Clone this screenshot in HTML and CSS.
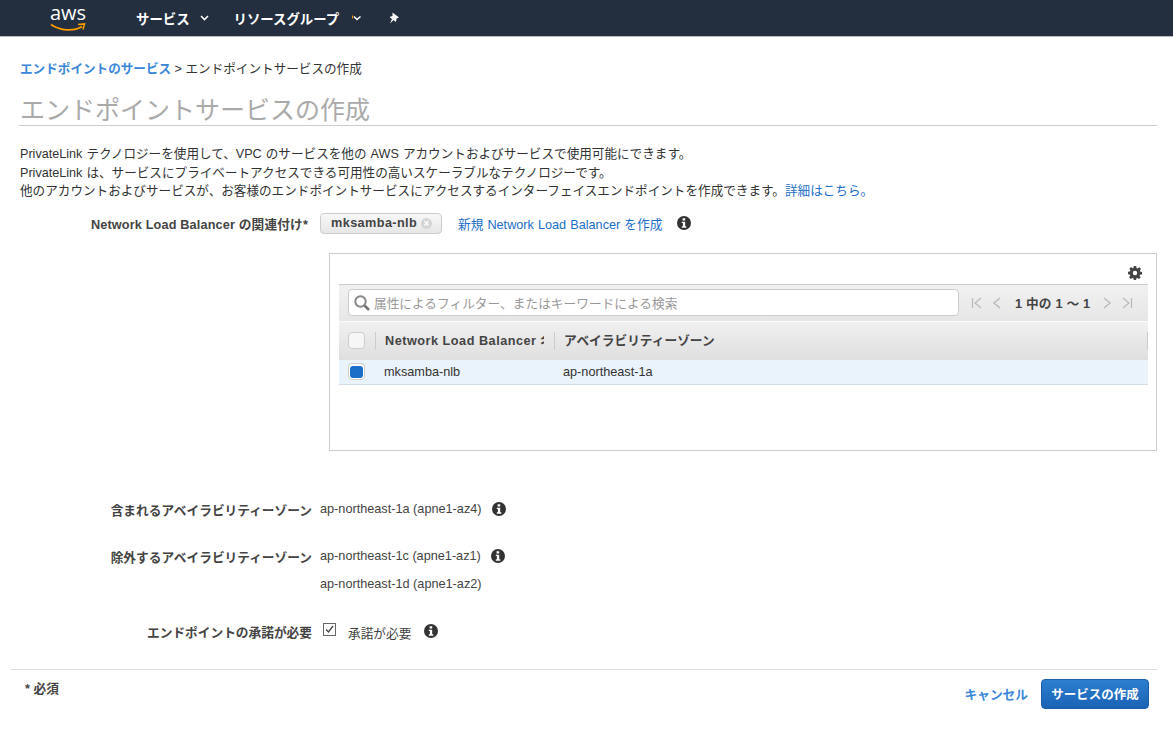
FILE: index.html
```html
<!DOCTYPE html>
<html lang="ja">
<head>
    <meta charset="UTF-8">
    <title>エンドポイントサービスの作成</title>
    <link rel="stylesheet" href="styles.css">
</head>
<body>

    <nav class="navbar">
        <div class="logo">
            <span class="logo-text">aws</span>
            <svg class="logo-smile" width="36" height="9" viewBox="0 0 36 9"><path d="M1 1.500C10 8 24 8.500 32 3.500" fill="none" stroke="#f90" stroke-width="1.800"/><path d="M28 1.500L34.500 1L33 6.500" fill="none" stroke="#f90" stroke-width="1.600"/></svg>
        </div>
        <span class="nav-item nav-services">サービス</span>
        <svg class="chevron" width="9" height="6" viewBox="0 0 9 6"><path d="M1 1l3.500 3.500L8 1" fill="none" stroke="#fff" stroke-width="1.600"/></svg>
        <span class="nav-item nav-groups">リソースグループ</span>
        <svg class="chevron chevron-groups" width="10" height="6" viewBox="0 0 10 6"><path d="M.5 .5v3" stroke="#f90" stroke-width="1"/><path d="M2 1.500l3 3 3.500-3" fill="none" stroke="#fff" stroke-width="1.600"/></svg>
        <svg class="pin" width="12" height="12" viewBox="0 0 12 12"><path d="M4.500.5L11 5.500 8.500 6.500 8 10 5.500 8 2 11.500 4 7 1.500 5 4.500 4z" fill="#fff"/></svg>
    </nav>

    <main class="content">
        <div class="breadcrumb"><a href="#">エンドポイントのサービス</a> &gt; エンドポイントサービスの作成</div>
        <h1>エンドポイントサービスの作成</h1>

        <div class="intro">
            <p>PrivateLink テクノロジーを使用して、VPC のサービスを他の AWS アカウントおよびサービスで使用可能にできます。</p>
            <p>PrivateLink は、サービスにプライベートアクセスできる可用性の高いスケーラブルなテクノロジーです。</p>
            <p>他のアカウントおよびサービスが、お客様のエンドポイントサービスにアクセスするインターフェイスエンドポイントを作成できます。<a href="#">詳細はこちら。</a></p>
        </div>

        <div class="form-row nlb-row">
            <div class="form-label">Network Load Balancer の関連付け*</div>
            <div class="form-value">
                <span class="token">mksamba-nlb<span class="token-x">×</span></span>
                <a class="new-link" href="#">新規 Network Load Balancer を作成</a>
                <svg class="info" viewBox="0 0 16 16"><use href="#info-icon"/></svg>
            </div>
        </div>

        <section class="panel">
            <div class="panel-top">
                <svg class="gear" width="14" height="14" viewBox="0 0 14 14"><path d="M5.800 0h2.400l.3 1.900 1.200.5L11.300 1.300 13 3l-1.100 1.500.5 1.200 1.600.3v2.400l-1.900.3-.5 1.200 1.100 1.500-1.700 1.700-1.500-1.100-1.200.5-.3 1.900H5.800l-.3-1.900-1.200-.5-1.500 1.100L1.100 11.300l1.100-1.500-.5-1.200L0 8.200V5.800l1.900-.3.500-1.200L1.300 2.800 3 1.100l1.500 1.100 1-.4zM7 4.800a2.200 2.200 0 1 0 0 4.400 2.200 2.200 0 0 0 0-4.400z" fill="#444" fill-rule="evenodd"/></svg>
            </div>
            <div class="toolbar">
                <div class="search">
                    <svg width="18" height="18" viewBox="0 0 18 18"><circle cx="7.500" cy="7.500" r="5.200" fill="none" stroke="#888" stroke-width="2"/><path d="M11.500 11.500l4.500 4.500" stroke="#777" stroke-width="2.600"/></svg>
                    <span>属性によるフィルター、またはキーワードによる検索</span>
                </div>
                <div class="pager">
                    <svg width="12" height="12" viewBox="0 0 12 12"><path d="M1.500 1v10M10 1L4 6l6 5" fill="none" stroke="#bbb" stroke-width="1.300"/></svg>
                    <svg width="10" height="12" viewBox="0 0 10 12"><path d="M8 1L2 6l6 5" fill="none" stroke="#bbb" stroke-width="1.500"/></svg>
                    <span class="pager-text">1 中の 1 ～ 1</span>
                    <svg width="10" height="12" viewBox="0 0 10 12"><path d="M2 1l6 5-6 5" fill="none" stroke="#bbb" stroke-width="1.500"/></svg>
                    <svg width="12" height="12" viewBox="0 0 12 12"><path d="M10.500 1v10M2 1l6 5-6 5" fill="none" stroke="#bbb" stroke-width="1.300"/></svg>
                </div>
            </div>
            <div class="table-head">
                <div class="cell-check"><span class="radio"></span></div>
                <div class="cell-name head-cell"><span class="clip">Network Load Balancer 名</span></div>
                <div class="cell-zone head-cell">アベイラビリティーゾーン</div>
            </div>
            <div class="table-row">
                <div class="cell-check"><span class="radio selected"><i></i></span></div>
                <div class="cell-name">mksamba-nlb</div>
                <div class="cell-zone">ap-northeast-1a</div>
            </div>
        </section>

        <div class="form-row zone-first">
            <div class="form-label">含まれるアベイラビリティーゾーン</div>
            <div class="form-value">
                <span>ap-northeast-1a (apne1-az4)</span>
                <svg class="info" viewBox="0 0 16 16"><use href="#info-icon"/></svg>
            </div>
        </div>

        <div class="form-row zone-second">
            <div class="form-label">除外するアベイラビリティーゾーン</div>
            <div class="form-value">
                <span>ap-northeast-1c (apne1-az1)</span>
                <svg class="info" viewBox="0 0 16 16"><use href="#info-icon"/></svg>
            </div>
        </div>
        <div class="form-row zone-extra">
            <div class="form-label"></div>
            <div class="form-value"><span>ap-northeast-1d (apne1-az2)</span></div>
        </div>

        <div class="form-row accept-row">
            <div class="form-label">エンドポイントの承諾が必要</div>
            <div class="form-value">
                <svg class="checkbox" width="13" height="13" viewBox="0 0 13 13"><rect x=".5" y=".5" width="12" height="12" fill="#fff" stroke="#666"/><path d="M3 6.500l2.500 2.500L10 3" fill="none" stroke="#444" stroke-width="1.300"/></svg>
                <span class="accept-text">承諾が必要</span>
                <svg class="info" viewBox="0 0 16 16"><use href="#info-icon"/></svg>
            </div>
        </div>
    </main>

    <footer class="footer">
        <span class="required">* 必須</span>
        <div class="actions">
            <a class="cancel" href="#">キャンセル</a>
            <button class="button">サービスの作成</button>
        </div>
    </footer>

    <svg width="0" height="0" class="defs">
        <symbol id="info-icon" viewBox="0 0 16 16">
            <path fill-rule="evenodd" fill="#333" d="M8 1a7 7 0 1 1 0 14A7 7 0 0 1 8 1zM6.600 3.200h2.600v2.300H6.600zM5.800 6.700h3.400v4.600h1.100v1.400H5.800v-1.400h1.100V8.100H5.800z"/>
        </symbol>
    </svg>

</body>
</html>
```
FILE: styles.css
```css
* {
    box-sizing: border-box;
}
body {
    margin: 0;
    font-family: "Liberation Sans", "Noto Sans CJK JP", sans-serif;
    font-size: 12.7px;
    color: #444;
    background-color: white;
    height: 730px;
    overflow: hidden;
}
a {
    color: #1a6ec7;
    text-decoration: none;
}
p {
    margin: 0;
}
.defs {
    position: absolute;
}
.navbar {
    height: 37px;
    background-color: #232f3e;
    border-bottom: 1px solid #b8bcc0;
    display: flex;
    align-items: center;
    color: white;
}
.logo {
    width: 36px;
    margin-left: 50px;
    height: 30px;
}
.logo-text {
    display: block;
    font-size: 20px;
    line-height: 20px;
    text-align: center;
    font-family: "Open Sans", sans-serif;
}
.logo-smile {
    display: block;
}
.nav-item {
    font-size: 13.4px;
    font-weight: bold;
}
.nav-services {
    margin-left: 50px;
}
.nav-groups {
    margin-left: 25px;
}
.chevron {
    margin-left: 10px;
}
.chevron-groups {
    margin-left: 13px;
}
.pin {
    margin-left: 26px;
}
.content {
    padding: 0 16px 0 20px;
}
.breadcrumb {
    margin-top: 23px;
    line-height: 18px;
    font-size: 12.6px;
    color: #333;
}
.breadcrumb a {
    font-weight: bold;
    color: #3a87d9;
}
h1 {
    margin: 12px 0 0 -1px;
    padding: 2px 0 0 1px;
    font-size: 25px;
    line-height: 36px;
    height: 36px;
    font-weight: normal;
    color: #aaa;
    border-bottom: 1px solid #ccc;
}
.intro {
    margin-top: 19px;
    line-height: 18.5px;
    font-size: 12.6px;
    word-spacing: .6px;
    color: #333;
}
.form-row {
    display: grid;
    grid-template-columns: 292px 1fr;
    column-gap: 8px;
    align-items: center;
}
.form-label {
    text-align: right;
    font-weight: bold;
    color: #444;
}
.form-value {
    display: flex;
    align-items: center;
}
.info {
    width: 16px;
    height: 16px;
}
.nlb-row {
    margin-top: 11px;
    height: 23px;
}
.nlb-row .form-label {
    padding-right: 4px;
    letter-spacing: .15px;
}
.token {
    width: 122px;
    height: 21px;
    padding-left: 10px;
    background: linear-gradient(#f8f8f8, #e6e6e6);
    border: 1px solid #ccc;
    border-radius: 4px;
    font-weight: bold;
    letter-spacing: .4px;
    display: flex;
    align-items: center;
    gap: 4px;
    white-space: pre;
}
.token-x {
    width: 11px;
    height: 11px;
    border-radius: 50%;
    background-color: #d5d5d5;
    color: white;
    font-size: 10px;
    line-height: 11px;
    text-align: center;
}
.new-link {
    margin-left: 16px;
    margin-right: 14px;
    word-spacing: .5px;
}
.panel {
    margin: 18px 0 0 309px;
    height: 198px;
    border: 1px solid #ccc;
    padding: 0 8px 0 9px;
}
.panel-top {
    height: 30px;
    display: flex;
    justify-content: flex-end;
    align-items: flex-end;
    padding: 0 6px 4px 0;
}
.toolbar {
    height: 38px;
    background: linear-gradient(#f1f1f1, #e6e6e6);
    border-top: 1px solid #ccc;
    border-bottom: 1px solid #fafafa;
    display: flex;
    align-items: center;
    padding-left: 9px;
}
.search {
    width: 611px;
    height: 27px;
    background-color: white;
    border: 1px solid #ccc;
    border-radius: 4px;
    display: flex;
    align-items: center;
    padding-left: 4px;
    gap: 3px;
    color: #999;
}
.pager {
    display: flex;
    align-items: center;
    margin-left: 12px;
    gap: 9px;
}
.pager-text {
    margin: 0 3px 0 4px;
    font-weight: bold;
    letter-spacing: .2px;
    color: #444;
}
.table-head {
    height: 38px;
    background: linear-gradient(#f0f0f0, #dfdfdf);
    display: flex;
    align-items: center;
    font-weight: bold;
}
.table-row {
    height: 25px;
    background-color: #eaf2fc;
    border-bottom: 1px solid #d5dde6;
    display: flex;
    align-items: center;
    color: #333;
}
.cell-check {
    width: 36px;
    padding-left: 9px;
    flex: none;
    display: flex;
}
.cell-name {
    width: 179px;
    padding-left: 9px;
    flex: none;
}
.cell-zone {
    padding-left: 9px;
}
.head-cell {
    height: 18px;
    line-height: 18px;
    border-left: 1px solid #ccc;
}
.cell-zone.head-cell {
    flex: 1;
    border-right: 1px solid #ccc;
}
.clip {
    display: block;
    width: 159px;
    overflow: hidden;
    white-space: nowrap;
    letter-spacing: .5px;
}
.radio {
    width: 17px;
    height: 17px;
    border: 1px solid #ccc;
    border-radius: 4px;
    background-color: #f6f6f6;
    display: flex;
    align-items: center;
    justify-content: center;
}
.radio.selected {
    background-color: white;
}
.radio i {
    display: block;
    width: 13px;
    height: 12px;
    border-radius: 3px;
    background-color: #1a6ec7;
}
.zone-first {
    margin-top: 49px;
    height: 18px;
}
.zone-second {
    margin-top: 29px;
    height: 18px;
}
.zone-extra {
    margin-top: 10px;
    height: 18px;
}
.zone-first .info,
.zone-second .info {
    margin-left: 9px;
}
.accept-row {
    margin-top: 28px;
    height: 18px;
}
.checkbox {
    margin-left: 3px;
    margin-top: -4px;
}
.accept-text {
    margin-left: 12px;
    margin-top: 2px;
}
.accept-row .info {
    margin-left: 12px;
}
.footer {
    margin: 30px 16px 0 11px;
    padding: 9px 8px 0 14px;
    border-top: 1px solid #ddd;
    display: flex;
    justify-content: space-between;
    align-items: flex-start;
}
.required {
    font-weight: bold;
    line-height: 18px;
    margin-top: 1px;
}
.actions {
    display: flex;
    align-items: center;
    gap: 13px;
}
.cancel {
    font-weight: bold;
    color: #3a87d9;
}
.button {
    width: 108px;
    height: 30px;
    font-family: inherit;
    font-size: 12.5px;
    font-weight: bold;
    color: white;
    background: linear-gradient(#2d7fd0, #1a62b5);
    border: 1px solid #1c5fa8;
    border-radius: 4px;
    padding: 0;
}
```
